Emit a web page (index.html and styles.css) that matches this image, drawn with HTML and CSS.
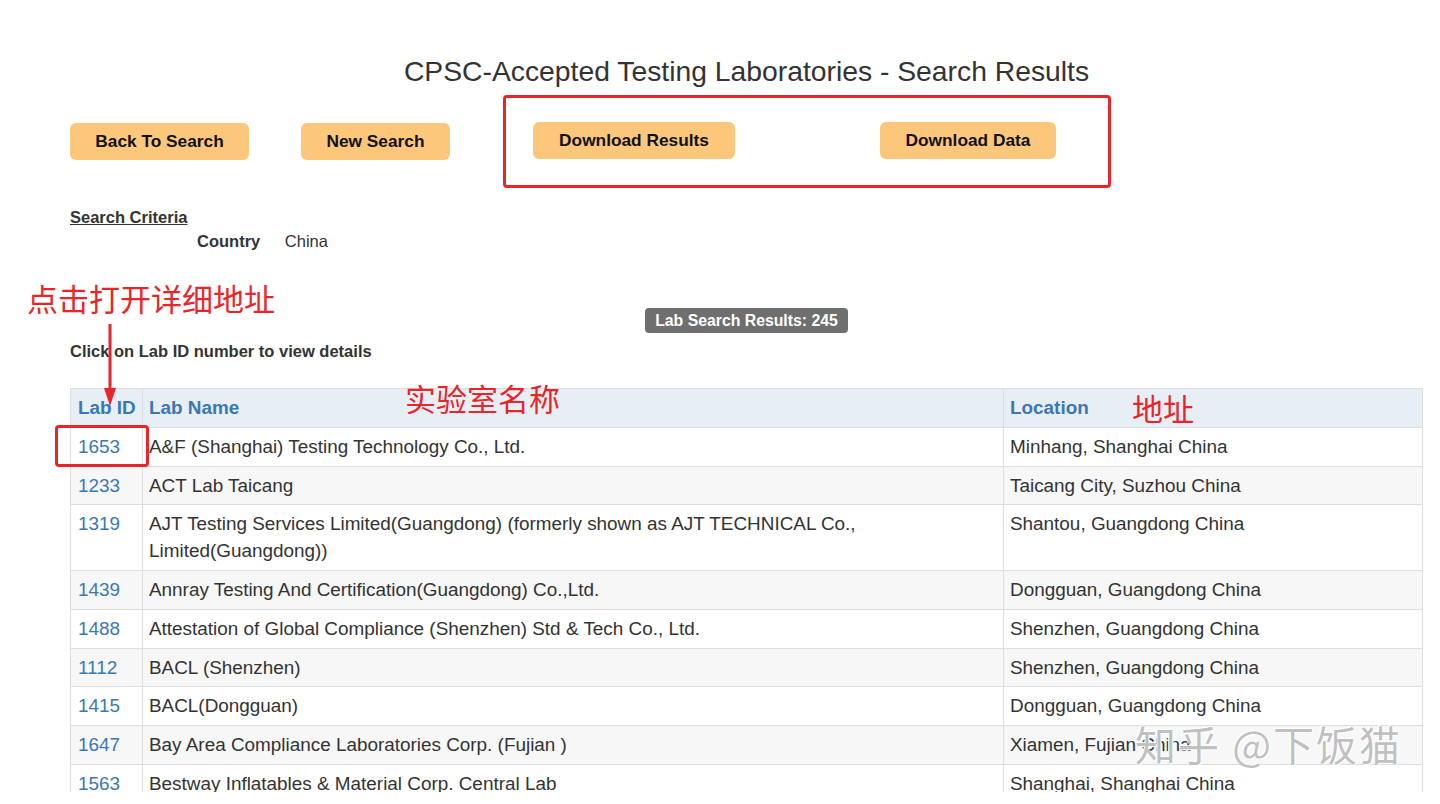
FILE: index.html
```html
<!DOCTYPE html>
<html lang="en">
<head>
    <meta charset="UTF-8">
    <title>CPSC-Accepted Testing Laboratories - Search Results</title>
    <link rel="stylesheet" href="styles.css">
</head>
<body>
    <div class="page">
        <div class="wrap">
            <h1 class="title">CPSC-Accepted Testing Laboratories - Search Results</h1>

            <div class="actions">
                <a class="btn btn-back">Back To Search</a>
                <a class="btn btn-new">New Search</a>
                <div class="mark-box">
                    <a class="btn btn-results">Download Results</a>
                    <a class="btn btn-data">Download Data</a>
                </div>
            </div>

            <div class="criteria">
                <div class="criteria-title">Search Criteria</div>
                <div class="criteria-row">
                    <span class="criteria-key">Country</span>
                    <span class="criteria-val">China</span>
                </div>
            </div>

            <div class="count-row">
                <span class="badge">Lab Search Results: 245</span>
            </div>

            <p class="hint">Click on Lab ID number to view details</p>

            <table class="results">
                <thead>
                    <tr>
                        <th class="col-id">Lab ID</th>
                        <th class="col-name">Lab Name</th>
                        <th class="col-loc">Location</th>
                    </tr>
                </thead>
                <tbody>
                    <tr><td><a>1653</a></td><td>A&amp;F (Shanghai) Testing Technology Co., Ltd.</td><td>Minhang, Shanghai China</td></tr>
                    <tr><td><a>1233</a></td><td>ACT Lab Taicang</td><td>Taicang City, Suzhou China</td></tr>
                    <tr><td><a>1319</a></td><td>AJT Testing Services Limited(Guangdong) (formerly shown as AJT TECHNICAL Co.,<br>Limited(Guangdong))</td><td>Shantou, Guangdong China</td></tr>
                    <tr><td><a>1439</a></td><td>Annray Testing And Certification(Guangdong) Co.,Ltd.</td><td>Dongguan, Guangdong China</td></tr>
                    <tr><td><a>1488</a></td><td>Attestation of Global Compliance (Shenzhen) Std &amp; Tech Co., Ltd.</td><td>Shenzhen, Guangdong China</td></tr>
                    <tr><td><a>1112</a></td><td>BACL (Shenzhen)</td><td>Shenzhen, Guangdong China</td></tr>
                    <tr><td><a>1415</a></td><td>BACL(Dongguan)</td><td>Dongguan, Guangdong China</td></tr>
                    <tr><td><a>1647</a></td><td>Bay Area Compliance Laboratories Corp. (Fujian )</td><td>Xiamen, Fujian China</td></tr>
                    <tr><td><a>1563</a></td><td>Bestway Inflatables &amp; Material Corp. Central Lab</td><td>Shanghai, Shanghai China</td></tr>
                </tbody>
            </table>
        </div>

        <!-- annotations drawn over the page -->
        <div class="note note-open">点击打开详细地址</div>
        <svg class="arrow" width="20" height="86" viewBox="0 0 20 86">
            <line x1="10" y1="2" x2="10" y2="70" stroke="#e8262a" stroke-width="3"/>
            <polygon points="4,66 16,66 10,84" fill="#e8262a"/>
        </svg>
        <div class="note note-name">实验室名称</div>
        <div class="note note-addr">地址</div>
        <div class="id-box"></div>
        <div class="watermark">知乎 @下饭猫</div>
    </div>
</body>
</html>
```

FILE: styles.css
```css
body {
    margin: 0;
    font-family: "Liberation Sans", Arial, sans-serif;
    color: #333;
    background: #fff;
}
.page {
    position: relative;
    height: 792px;
    overflow: hidden;
}
.wrap {
    padding: 0 17px 0 70px;
}
.title {
    margin: 55px 0 0;
    font-size: 28.3px;
    line-height: 32px;
    font-weight: normal;
    text-align: center;
    color: #333;
}

/* buttons */
.actions {
    display: flex;
    align-items: center;
    margin-top: 8px;
}
.btn {
    display: flex;
    justify-content: center;
    align-items: center;
    height: 37px;
    background: #fcc77b;
    border-radius: 6px;
    color: #111;
    font-weight: bold;
    font-size: 17.3px;
    cursor: pointer;
}
.btn-back {
    width: 179px;
    margin-right: 52px;
}
.btn-new {
    width: 149px;
    margin-right: 53px;
}
.btn-results {
    width: 202px;
    margin-right: 145px;
}
.btn-data {
    width: 176px;
}
.mark-box {
    display: flex;
    align-items: center;
    border: 3px solid #e8262a;
    border-radius: 4px;
    padding: 24px 52px 26px 27px;
}

/* criteria */
.criteria {
    margin-top: 19px;
    font-size: 16.5px;
    line-height: 20px;
}
.criteria-title {
    font-weight: bold;
    text-decoration: underline;
}
.criteria-row {
    margin-top: 4px;
    padding-left: 127px;
}
.criteria-key {
    font-weight: bold;
    margin-right: 20px;
}

.count-row {
    margin-top: 57px;
    text-align: center;
}
.badge {
    display: inline-block;
    height: 25px;
    line-height: 25px;
    padding: 0 10px;
    background: #6f6f6f;
    color: #fff;
    font-weight: bold;
    font-size: 15.8px;
    border-radius: 4px;
}
.hint {
    margin: 8px 0 0;
    font-size: 16.5px;
    line-height: 20px;
    font-weight: bold;
}

/* table */
.results {
    margin-top: 27px;
    width: 1353px;
    border-collapse: collapse;
    table-layout: fixed;
    font-size: 18.9px;
    line-height: 26.8px;
}
.results th,
.results td {
    box-sizing: border-box;
    border: 1px solid #ddd;
    padding: 6px 6px 5px;
    text-align: left;
    vertical-align: top;
    white-space: nowrap;
}
.results th {
    background: #e8eef6;
    color: #3a78b5;
    font-weight: bold;
}
.results td:first-child,
.results th:first-child {
    padding-left: 7px;
    padding-right: 2px;
}
.results tbody tr:nth-child(even) {
    background: #f7f7f7;
}
.results a {
    color: #3a78b5;
}
.col-id {
    width: 72px;
}
.col-name {
    width: 861px;
}

/* annotations */
.note {
    position: absolute;
    font-family: "Noto Sans CJK SC", sans-serif;
    color: #e8262a;
    font-size: 31px;
    line-height: 34px;
}
.note-open {
    left: 27px;
    top: 281px;
}
.note-name {
    left: 405px;
    top: 381px;
}
.note-addr {
    left: 1132px;
    top: 391px;
}
.arrow {
    position: absolute;
    left: 100px;
    top: 322px;
}
.id-box {
    position: absolute;
    left: 55px;
    top: 425px;
    width: 88px;
    height: 36px;
    border: 3px solid #e8262a;
    border-radius: 4px;
}
.watermark {
    position: absolute;
    left: 1135px;
    top: 718px;
    font-family: "Noto Sans CJK SC", sans-serif;
    font-size: 41px;
    line-height: 50px;
    letter-spacing: 2px;
    color: rgba(150, 150, 150, 0.6);
    text-shadow: 1px 1px 0 #fff, -1px -1px 0 #fff;
    white-space: nowrap;
}
```
